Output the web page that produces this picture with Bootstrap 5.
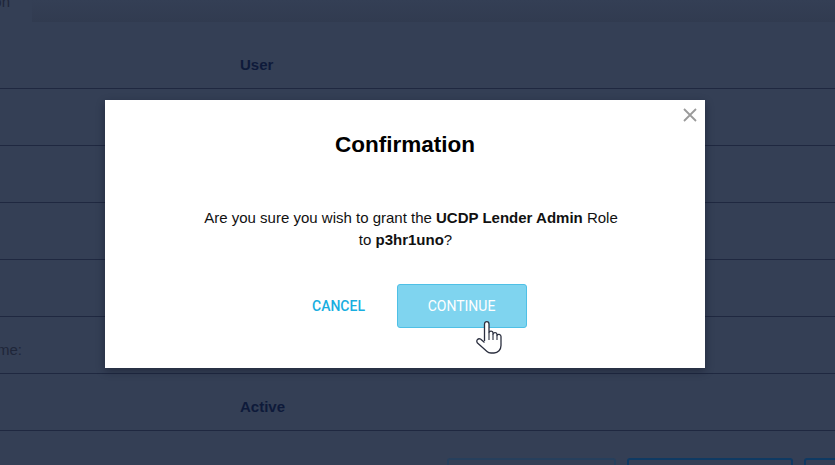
<!DOCTYPE html>
<html lang="en"><head><meta charset="utf-8"><title>Confirmation</title>
<link href="https://cdn.jsdelivr.net/npm/bootstrap@5.3.0/dist/css/bootstrap.min.css" rel="stylesheet">
<style>
html,body{height:465px;overflow:hidden}
body{background:#343f55;font-family:"Liberation Sans",Arial,sans-serif;color:#1f2639;position:relative}
.top-strip{height:22px}
.clip-label{width:10px;margin-right:22px;margin-top:-8px;flex:none;display:flex;justify-content:flex-end;white-space:nowrap;font-size:15px;line-height:20px;height:20px;color:#1f2639}
.top-band{flex:1;background:linear-gradient(#343f55,#313b50)}
.rows{padding-top:10px}
.data-row{height:57px;border-bottom:1px solid #1f2840;align-items:center;padding-top:11px}
.row-label{width:22px;flex:none;display:flex;justify-content:flex-end;white-space:nowrap;font-size:15px;color:#1f2639}
.row-value{margin-left:240px;font-size:15px;font-weight:700;color:#0e1a3a}
.foot-btns{padding-top:27px;margin-left:447px;gap:11px}
.foot-btn{height:20px;flex:none;background:transparent;border:2px solid #263f5c;border-radius:3px}
.foot-a{width:169px}.foot-b{width:166px;border-color:#0f3a63}.foot-c{width:60px;border-color:#0f3a63}
.confirm-box{position:absolute;left:105px;top:100px;width:600px;height:268px;background:#fff;box-shadow:0 3px 8px rgba(15,20,35,.45);text-align:center;color:#000;border:0;border-radius:0}
.confirm-title{font-size:22.5px;font-weight:700;line-height:26px;margin:32px 0 0;color:#000}
.confirm-text{font-size:15px;line-height:22px;margin:49px 0 0;padding-left:12px;color:#111}
.line-two{padding-right:11px}
.x-btn{position:absolute;top:8px;right:8px;padding:0;border:0;background:none;line-height:0}
.confirm-actions{margin-top:33px;padding-left:25px}
.btn-cancel{width:60px;margin-right:28px;padding:0;border:0;background:none;color:#19aee0;font-family:Roboto,"Liberation Sans",sans-serif;font-weight:500;font-size:14px}
.btn-continue{width:130px;height:44px;padding:0;background:#7fd4ef;border:1px solid #4fc0e6;border-radius:3px;color:#fff;font-family:Roboto,"Liberation Sans",sans-serif;font-size:14px}
.hand{position:absolute;left:476px;top:320px}
</style></head>
<body>
<div class="d-flex top-strip"><div class="clip-label">Information</div><div class="top-band"></div></div>
<div class="rows">
  <div class="d-flex data-row"><div class="row-value">User</div></div>
  <div class="d-flex data-row"></div>
  <div class="d-flex data-row"></div>
  <div class="d-flex data-row"></div>
  <div class="d-flex data-row"></div>
  <div class="d-flex data-row"><div class="row-label">Name:</div></div>
  <div class="d-flex data-row"><div class="row-value">Active</div></div>
</div>
<div class="d-flex foot-btns">
  <div class="foot-btn foot-a"></div><div class="foot-btn foot-b"></div><div class="foot-btn foot-c"></div>
</div>
<div class="card confirm-box">
  <button type="button" class="x-btn" aria-label="Close"><svg width="14" height="14" viewBox="0 0 14 14"><path d="M1 1 13 13M13 1 1 13" stroke="#9a9a9a" stroke-width="1.8" fill="none"/></svg></button>
  <h5 class="confirm-title">Confirmation</h5>
  <p class="confirm-text">Are you sure you wish to grant the <b>UCDP Lender Admin</b> Role<br><span class="line-two">to <b>p3hr1uno</b>?</span></p>
  <div class="confirm-actions d-flex justify-content-center align-items-center">
    <button type="button" class="btn btn-cancel">CANCEL</button>
    <button type="button" class="btn btn-continue">CONTINUE</button>
  </div>
</div>
<svg class="hand" width="27" height="35" viewBox="0 0 27 35"><path d="M8.500 21V4c0-3.200 4.500-3.200 4.500 0v8.500c.5-2 4-2 4 .5v1c.5-2 4-2 4 .5v1c.5-1.800 4-1.500 4 1v9c0 4-3 7.500-7 7.500h-3c-2 0-3-.5-4-1.500L1.500 23c-1.800-2.500.5-5 3-4l4 3.500" fill="#fff" stroke="#2b2f3f" stroke-width="1.300" stroke-linejoin="round"/><path d="M13 12.500V20M17 14v6M21 15.500V20" stroke="#2b2f3f" stroke-width="1.100" fill="none"/></svg>
<script src="https://cdn.jsdelivr.net/npm/bootstrap@5.3.0/dist/js/bootstrap.bundle.min.js"></script>
</body></html>
